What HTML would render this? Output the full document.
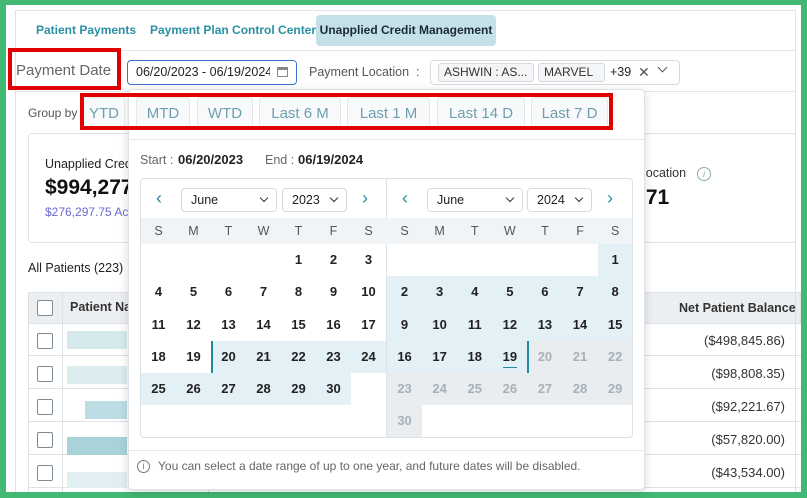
<!DOCTYPE html>
<html><head><meta charset="utf-8"><style>
*{box-sizing:border-box;margin:0;padding:0}
body{width:807px;height:498px;overflow:hidden;background:#41b874;font-family:"Liberation Sans",sans-serif;position:relative}
.a{position:absolute}
#page{left:6px;top:5px;width:795px;height:487px;background:#fff}
.tab{top:15px;height:31px;line-height:31px;font-size:12px;font-weight:bold;color:#2a8fa2;white-space:nowrap}
.red{border:4px solid #e00000}
.cal{display:grid;grid-template-columns:repeat(7,35px);grid-auto-rows:32.3px;font-size:13px;font-weight:bold;color:#222}
.cal div{text-align:center;line-height:32px}
.r{background:#e3f1f6}
.d{background:#e9edf0;color:#a7b1b9}
.st{box-shadow:inset 2px 0 0 #1f8a9d}
.wk{display:grid;grid-template-columns:repeat(7,35px);font-size:12.5px;color:#555;background:#f1f4f6;height:26px;line-height:26px;text-align:center}
.sel{border:1px solid #d5dbe0;border-radius:4px;height:24px;font-size:12.5px;line-height:22px;padding-left:9px;color:#222}
.chev{position:absolute;right:9px;top:6px;width:6px;height:6px;border-right:1.2px solid #333;border-bottom:1.2px solid #333;transform:rotate(45deg)}
.gb{top:97px;height:31px;line-height:31px;font-size:15px;color:#6e9fb0;border:1px solid #e3e7ea;border-radius:3px;text-align:center;background:#f7f9fa}
.row{left:28px;width:773px;height:32px;border-bottom:1px solid #dde2e6}
.cb{left:37px;width:16px;height:16px;border:1.5px solid #7e8b95;border-radius:2px;background:#fff}
.amt{right:22px;font-size:13px;color:#333;text-align:right}
</style></head><body>
<div id="page" class="a"></div>
<div class="a" style="left:15px;top:10px;width:781px;height:482px;border:1px solid #dfe4e8;border-bottom:none"></div>
<div class="a tab" style="left:36px">Patient Payments</div>
<div class="a tab" style="left:150px">Payment Plan Control Center</div>
<div class="a tab" style="left:316px;width:180px;background:#c3e1e7;border-radius:4px;color:#1c2b33;text-align:center">Unapplied Credit Management</div>
<div class="a" style="left:16px;top:50px;width:780px;height:1px;background:#e2e6ea"></div>
<div class="a red" style="left:8px;top:48px;width:113px;height:42px"></div>
<div class="a" style="left:16px;top:62px;font-size:15px;color:#666">Payment Date</div>
<div class="a" style="left:127px;top:60px;width:170px;height:25px;border:1.5px solid #3f72c9;border-radius:4px;font-size:12.5px;line-height:22px;padding-left:8px;color:#222;overflow:hidden;white-space:nowrap">06/20/2023 - 06/19/2024<span style="position:absolute;right:0;top:0;width:26px;height:22px;background:#fff"></span><span style="position:absolute;right:8px;top:6px;width:11px;height:10px;border:1.2px solid #888;border-top-width:3px"></span></div>
<div class="a" style="left:309px;top:65px;font-size:12.5px;color:#555">Payment Location &nbsp;:</div>
<div class="a" style="left:430px;top:60px;width:250px;height:25px;border:1px solid #d5dbe0;border-radius:4px"></div>
<div class="a" style="left:438px;top:63px;width:96px;height:19px;border:1px solid #d3d9de;border-radius:3px;background:#f3f5f7;font-size:12px;line-height:17px;padding-left:5px;color:#333">ASHWIN : AS...</div>
<div class="a" style="left:538px;top:63px;width:67px;height:19px;border:1px solid #d3d9de;border-radius:3px;background:#f3f5f7;font-size:12px;line-height:17px;padding-left:5px;color:#333">MARVEL ...</div>
<div class="a" style="left:610px;top:65px;font-size:12.5px;color:#222">+39</div>
<div class="a" style="left:638px;top:65px;font-size:14px;color:#555;line-height:14px">✕</div>
<div class="a" style="left:659px;top:64px;width:7px;height:7px;border-right:1.2px solid #555;border-bottom:1.2px solid #555;transform:rotate(45deg)"></div>
<div class="a" style="left:16px;top:91px;width:780px;height:1px;background:#e2e6ea"></div>
<div class="a" style="left:28px;top:106px;font-size:12px;color:#555">Group by</div>
<div class="a" style="left:28px;top:133px;width:768px;height:110px;border:1px solid #dfe4e8;border-radius:4px"></div>
<div class="a" style="left:45px;top:157px;font-size:12.5px;color:#222">Unapplied Credit</div>
<div class="a" style="left:45px;top:176px;font-size:21px;font-weight:bold;color:#111">$994,277</div>
<div class="a" style="left:45px;top:205px;font-size:12px;color:#6a6ad0">$276,297.75 Ac</div>
<div class="a" style="left:643px;top:166px;font-size:12.5px;color:#333">location</div>
<div class="a" style="left:697px;top:167px;width:14px;height:14px;border:1.2px solid #8aa;border-radius:50%;font-size:9px;text-align:center;line-height:12px;color:#8aa;font-style:italic">i</div>
<div class="a" style="left:640px;top:186px;font-size:21px;font-weight:bold;color:#111">.71</div>
<div class="a" style="left:28px;top:261px;font-size:12.5px;color:#222">All Patients (223)</div>
<div class="a" style="left:28px;top:292px;width:773px;height:32px;background:#eceff2;border:1px solid #dde2e6"></div>
<div class="a" style="left:62px;top:292px;width:1px;height:200px;background:#dde2e6"></div>
<div class="a" style="left:208px;top:324px;width:1px;height:168px;background:#dde2e6"></div>
<div class="a" style="left:795px;top:292px;width:1px;height:200px;background:#dde2e6"></div>
<div class="a" style="left:28px;top:292px;width:1px;height:200px;background:#dde2e6"></div>
<div class="a cb" style="top:300px"></div>
<div class="a" style="left:70px;top:300px;font-size:12.5px;font-weight:bold;color:#333">Patient Name</div>
<div class="a" style="left:679px;top:301px;font-size:12.5px;font-weight:bold;color:#333">Net Patient Balance</div>
<div class="a row" style="top:324px"></div><div class="a row" style="top:357px"></div><div class="a row" style="top:390px"></div><div class="a row" style="top:423px"></div><div class="a row" style="top:456px"></div>
<div class="a cb" style="top:333px"></div><div class="a cb" style="top:366px"></div><div class="a cb" style="top:399px"></div><div class="a cb" style="top:432px"></div><div class="a cb" style="top:465px"></div>
<div class="a" style="left:67px;top:331px;width:60px;height:18px;background:#d6eaee"></div>
<div class="a" style="left:67px;top:366px;width:60px;height:18px;background:#dcecef"></div>
<div class="a" style="left:85px;top:401px;width:42px;height:18px;background:#bcdde3"></div>
<div class="a" style="left:67px;top:437px;width:60px;height:18px;background:#a9d3d9"></div>
<div class="a" style="left:67px;top:472px;width:60px;height:16px;background:#e2eff2"></div>
<div class="a amt" style="top:333px">($498,845.86)</div>
<div class="a amt" style="top:366px">($98,808.35)</div>
<div class="a amt" style="top:399px">($92,221.67)</div>
<div class="a amt" style="top:432px">($57,820.00)</div>
<div class="a amt" style="top:465px">($43,534.00)</div>
<div class="a" style="left:128px;top:89px;width:517px;height:401px;background:#fff;border:1px solid #dde2e6;border-radius:4px;box-shadow:0 3px 10px rgba(0,0,0,.15)"></div>
<div class="a gb" style="left:83px;width:42px">YTD</div>
<div class="a gb" style="left:136px;width:54px">MTD</div>
<div class="a gb" style="left:197px;width:56px">WTD</div>
<div class="a gb" style="left:259px;width:82px">Last 6 M</div>
<div class="a gb" style="left:347px;width:83px">Last 1 M</div>
<div class="a gb" style="left:437px;width:88px">Last 14 D</div>
<div class="a gb" style="left:531px;width:77px">Last 7 D</div>
<div class="a red" style="left:80px;top:93px;width:533px;height:37px"></div>
<div class="a" style="left:128px;top:139px;width:517px;height:1px;background:#e4e8eb"></div>
<div class="a" style="left:140px;top:153px;font-size:12.5px;color:#666">Start :</div>
<div class="a" style="left:178px;top:152px;font-size:13px;font-weight:bold;color:#222">06/20/2023</div>
<div class="a" style="left:265px;top:153px;font-size:12.5px;color:#666">End :</div>
<div class="a" style="left:298px;top:152px;font-size:13px;font-weight:bold;color:#222">06/19/2024</div>
<div class="a" style="left:140px;top:178px;width:493px;height:260px;border:1px solid #dde2e6;border-radius:4px;overflow:hidden">
 <div class="a" style="left:245px;top:0;width:1px;height:260px;background:#dde2e6"></div>
 <div class="a" style="left:15px;top:9px;font-size:18px;color:#2a8fa2">‹</div>
 <div class="a sel" style="left:40px;top:9px;width:96px">June<span class="chev"></span></div>
 <div class="a sel" style="left:141px;top:9px;width:65px">2023<span class="chev"></span></div>
 <div class="a" style="left:221px;top:9px;font-size:18px;color:#2a8fa2">›</div>
 <div class="a" style="left:261px;top:9px;font-size:18px;color:#2a8fa2">‹</div>
 <div class="a sel" style="left:286px;top:9px;width:96px">June<span class="chev"></span></div>
 <div class="a sel" style="left:386px;top:9px;width:65px">2024<span class="chev"></span></div>
 <div class="a" style="left:466px;top:9px;font-size:18px;color:#2a8fa2">›</div>
 <div class="a wk" style="left:0;top:39px;width:492px;grid-template-columns:repeat(7,35px) 1px repeat(7,35.1px)"><div>S</div><div>M</div><div>T</div><div>W</div><div>T</div><div>F</div><div>S</div><div></div><div>S</div><div>M</div><div>T</div><div>W</div><div>T</div><div>F</div><div>S</div></div>
 <div class="a cal" style="left:0;top:65px">
  <div></div><div></div><div></div><div></div><div>1</div><div>2</div><div>3</div>
  <div>4</div><div>5</div><div>6</div><div>7</div><div>8</div><div>9</div><div>10</div>
  <div>11</div><div>12</div><div>13</div><div>14</div><div>15</div><div>16</div><div>17</div>
  <div>18</div><div>19</div><div class="r st">20</div><div class="r">21</div><div class="r">22</div><div class="r">23</div><div class="r">24</div>
  <div class="r">25</div><div class="r">26</div><div class="r">27</div><div class="r">28</div><div class="r">29</div><div class="r">30</div><div></div>
 </div>
 <div class="a cal" style="left:246px;top:65px;grid-template-columns:repeat(7,35.1px)">
  <div></div><div></div><div></div><div></div><div></div><div></div><div class="r">1</div>
  <div class="r">2</div><div class="r">3</div><div class="r">4</div><div class="r">5</div><div class="r">6</div><div class="r">7</div><div class="r">8</div>
  <div class="r">9</div><div class="r">10</div><div class="r">11</div><div class="r">12</div><div class="r">13</div><div class="r">14</div><div class="r">15</div>
  <div class="r">16</div><div class="r">17</div><div class="r">18</div><div class="r"><span style="border-bottom:1.5px solid #1f8a9d;padding-bottom:3px">19</span></div><div class="d st">20</div><div class="d">21</div><div class="d">22</div>
  <div class="d">23</div><div class="d">24</div><div class="d">25</div><div class="d">26</div><div class="d">27</div><div class="d">28</div><div class="d">29</div>
  <div class="d">30</div>
 </div>
</div>
<div class="a" style="left:128px;top:450px;width:517px;height:1px;background:#e4e8eb"></div>
<div class="a" style="left:137px;top:460px;width:13px;height:13px;border:1.2px solid #777;border-radius:50%;font-size:9px;text-align:center;line-height:11px;color:#777">i</div>
<div class="a" style="left:158px;top:459px;font-size:12px;color:#666">You can select a date range of up to one year, and future dates will be disabled.</div>
</body></html>
